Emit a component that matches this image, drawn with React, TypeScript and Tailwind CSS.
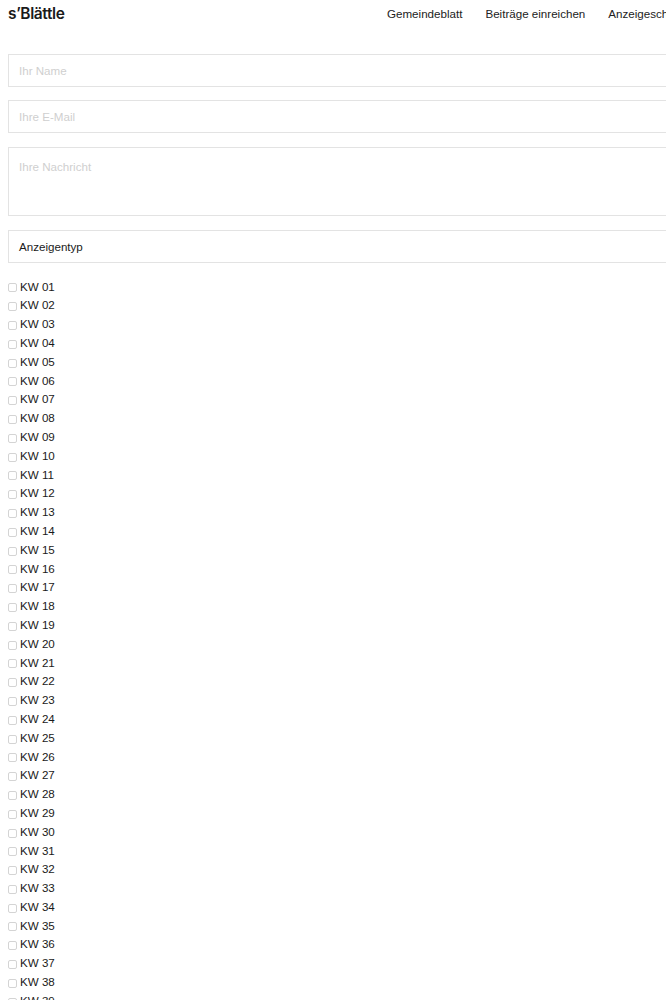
import React from 'react';

const weeks = Array.from({ length: 52 }, (_, i) => `KW ${String(i + 1).padStart(2, '0')}`);

const App = () => {
  return (
    <div className="w-full overflow-hidden bg-white text-[#1a1a1a]" style={{ fontFamily: '"Liberation Sans", Inter, sans-serif' }}>
      <div className="w-[820px] px-2">
        {/* Header */}
        <header className="flex items-center h-[27px]">
          <div className="w-[379px] text-[15.5px] font-semibold tracking-tight" style={{ fontFamily: 'Inter, "Liberation Sans", sans-serif' }}>s’Blättle</div>
          <nav className="flex gap-[23px] text-[11.6px] text-[#222]">
            <a>Gemeindeblatt</a>
            <a>Beiträge einreichen</a>
            <a>Anzeigeschaltung</a>
            <a>Kontakt</a>
          </nav>
        </header>

        {/* Form */}
        <form className="mt-[27px] flex flex-col">
          <input
            className="h-[33px] mb-[13px] border border-[#e3e3e3] px-[10px] text-[11.6px] placeholder:text-[#cfcfcf] outline-none"
            placeholder="Ihr Name"
          />
          <input
            className="h-[33px] mb-[14px] border border-[#e3e3e3] px-[10px] text-[11.6px] placeholder:text-[#cfcfcf] outline-none"
            placeholder="Ihre E-Mail"
          />
          <textarea
            className="h-[69px] mb-[14px] border border-[#e3e3e3] px-[10px] pt-[10px] text-[11.6px] placeholder:text-[#cfcfcf] outline-none resize-none"
            placeholder="Ihre Nachricht"
          />
          <div className="h-[33px] border border-[#e3e3e3] px-[10px] text-[11.6px] flex items-center">
            Anzeigentyp
          </div>
        </form>

        {/* Weeks */}
        <div className="mt-[14px] flex flex-col">
          {weeks.map((w) => (
            <label key={w} className="flex items-center h-[18.8px] text-[11.6px] leading-none">
              <span className="w-[9px] h-[9px] border border-[#d4d4d4] rounded-[2px] mt-[3px] mr-[3px] bg-white" />
              {w}
            </label>
          ))}
        </div>
      </div>
    </div>
  );
};

export default App;
